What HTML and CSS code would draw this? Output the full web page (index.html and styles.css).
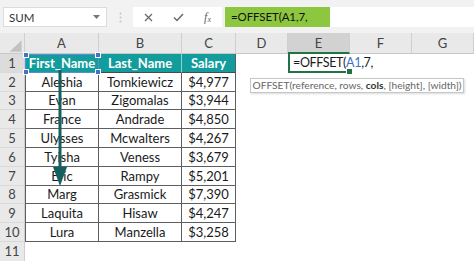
FILE: index.html
```html
<!DOCTYPE html>
<html>
<head>
<meta charset="utf-8">
<link rel="stylesheet" href="styles.css">
</head>
<body>
<div class="toolbar">
  <div class="namebox"><span>SUM</span><svg class="dd" width="7" height="4" viewBox="0 0 7 4"><path d="M0 0H7L3.5 4Z" fill="#777"/></svg></div>
  <div class="grip"><svg width="3" height="11" viewBox="0 0 3 11"><circle cx="1.5" cy="1.5" r="1" fill="#c4c4c4"/><circle cx="1.5" cy="5.5" r="1" fill="#c4c4c4"/><circle cx="1.5" cy="9.5" r="1" fill="#c4c4c4"/></svg></div>
  <div class="btns">
    <svg width="9" height="9" viewBox="0 0 9 9"><path d="M1 1L8 8M8 1L1 8" stroke="#6a6a6a" stroke-width="1.3"/></svg>
    <svg width="11" height="9" viewBox="0 0 11 9"><path d="M1 4.5L4 7.5L10 1" stroke="#6a6a6a" stroke-width="1.5" fill="none"/></svg>
    <span class="fx">f<sub>x</sub></span>
  </div>
  <div class="fbar"><span class="hl">=OFFSET(A1,7,</span></div>
</div>
<div class="sheet">
  <div class="corner"><svg width="25" height="21" viewBox="0 0 25 21"><path d="M22.5 7V19H10Z" fill="#c2c2c2"/></svg></div>
  <div class="ch">A</div><div class="ch">B</div><div class="ch">C</div><div class="ch">D</div><div class="ch sel">E</div><div class="ch">F</div><div class="ch">G</div>

  <div class="rh sel">1</div><div class="th first">First_Name</div><div class="th">Last_Name</div><div class="th">Salary</div><div class="e"></div><div class="e active"><span class="etext">=OFFSET(<span class="ref">A1</span>,7,</span></div><div class="e"></div><div class="e"></div>

  <div class="rh">2</div><div class="td first">Aleshia</div><div class="td">Tomkiewicz</div><div class="td">$4,977</div><div class="e"></div><div class="e"></div><div class="e"></div><div class="e"></div>
  <div class="rh">3</div><div class="td first">Evan</div><div class="td">Zigomalas</div><div class="td">$3,944</div><div class="e"></div><div class="e"></div><div class="e"></div><div class="e"></div>
  <div class="rh">4</div><div class="td first">France</div><div class="td">Andrade</div><div class="td">$4,850</div><div class="e"></div><div class="e"></div><div class="e"></div><div class="e"></div>
  <div class="rh">5</div><div class="td first">Ulysses</div><div class="td">Mcwalters</div><div class="td">$4,267</div><div class="e"></div><div class="e"></div><div class="e"></div><div class="e"></div>
  <div class="rh">6</div><div class="td first">Tyisha</div><div class="td">Veness</div><div class="td">$3,679</div><div class="e"></div><div class="e"></div><div class="e"></div><div class="e"></div>
  <div class="rh">7</div><div class="td first">Eric</div><div class="td">Rampy</div><div class="td">$5,201</div><div class="e"></div><div class="e"></div><div class="e"></div><div class="e"></div>
  <div class="rh">8</div><div class="td first">Marg</div><div class="td">Grasmick</div><div class="td">$7,390</div><div class="e"></div><div class="e"></div><div class="e"></div><div class="e"></div>
  <div class="rh">9</div><div class="td first">Laquita</div><div class="td">Hisaw</div><div class="td">$4,247</div><div class="e"></div><div class="e"></div><div class="e"></div><div class="e"></div>
  <div class="rh">10</div><div class="td first">Lura</div><div class="td">Manzella</div><div class="td">$3,258</div><div class="e"></div><div class="e"></div><div class="e"></div><div class="e"></div>
  <div class="rh last">11</div><div class="e"></div><div class="e"></div><div class="e"></div><div class="e"></div><div class="e"></div><div class="e"></div><div class="e"></div>

  <div class="refbox"><i class="h tl"></i><i class="h tr"></i><i class="h br"></i><i class="h bl"></i></div>
  <svg class="arrow" width="20" height="118" viewBox="0 0 20 118"><rect x="8.5" y="0" width="3" height="102" fill="#146060"/><path d="M3 97H17L10 116Z" fill="#146060"/></svg>
  <div class="tip">OFFSET(reference, rows,&nbsp;<b>cols</b>, [height], [width])</div>
</div>
</body>
</html>
```

FILE: styles.css
```css
html, body {
  margin: 0;
  padding: 0;
}
body {
  width: 474px;
  height: 262px;
  overflow: hidden;
  background: #fff;
  font-family: Lato, "Liberation Sans", sans-serif;
}

/* ---------- formula toolbar ---------- */
.toolbar {
  height: 33px;
  box-sizing: border-box;
  padding-top: 7px;
  background: #f2f2f2;
  display: flex;
  align-items: flex-start;
}
.namebox {
  margin-left: 3px;
  width: 104px;
  height: 20px;
  box-sizing: border-box;
  background: #fff;
  border: 1px solid #dcdcdc;
  display: flex;
  align-items: center;
  padding: 0 6px 0 5px;
  font-size: 11.5px;
  color: #333;
}
.namebox .dd {
  margin-left: auto;
}
.grip {
  width: 26px;
  height: 20px;
  display: flex;
  align-items: center;
  justify-content: center;
}
.btns {
  width: 89px;
  height: 20px;
  background: #fff;
  display: flex;
  align-items: center;
  justify-content: space-between;
  padding: 0 11px 0 11px;
  box-sizing: border-box;
}
.fx {
  font-family: "Liberation Serif", serif;
  font-style: italic;
  font-size: 12px;
  color: #666;
  line-height: 1;
}
.fx sub {
  font-size: 8px;
  vertical-align: -1px;
}
.fbar {
  margin-left: 3px;
  flex: 1;
  height: 20px;
  background: #fff;
  display: flex;
}
.hl {
  width: 105px;
  box-sizing: border-box;
  padding-left: 6px;
  background: #8dc63f;
  font-size: 11.5px;
  letter-spacing: -0.1px;
  line-height: 20px;
  color: #111;
}

/* ---------- sheet grid ---------- */
.sheet {
  position: relative;
  display: grid;
  grid-template-columns: 25px 74px 83px 54px 52px 62px 62px 62px;
  grid-template-rows: 21px repeat(11, 18.8px);
  font-size: 13px;
  color: #1a1a1a;
}
.sheet > div {
  box-sizing: border-box;
  display: flex;
  align-items: center;
  justify-content: center;
  white-space: nowrap;
}
.corner {
  background: #e9e9e9;
  border-right: 1px solid #cfcfcf;
  border-bottom: 1px solid #c8c8c8;
}
.ch {
  background: #e9e9e9;
  border-right: 1px solid #cfcfcf;
  border-bottom: 1px solid #c8c8c8;
  color: #444;
  font-size: 13px;
}
.ch.sel {
  background: #d2d2d2;
  border-bottom: 2px solid #217346;
}
.rh {
  background: #e9e9e9;
  border-right: 1px solid #cfcfcf;
  border-bottom: 1px solid #d9d9d9;
  color: #444;
  font-size: 13px;
}
.rh.sel {
  background: #dcdcdc;
}
.rh.last {
  border-bottom: none;
}
.th {
  background: #129c9c;
  color: #fff;
  font-weight: bold;
  border-right: 1px solid #8fd0d0;
  border-bottom: 1px solid #4a4a4a;
}
.td {
  border-right: 1px solid #5e5e5e;
  border-bottom: 1px solid #5e5e5e;
}
.th:nth-child(4n) , .td:nth-child(4n) {
  border-right-color: #5e5e5e;
}
.first {
  border-left: 1px solid #5e5e5e;
}
.sheet > .active {
  justify-content: flex-start;
  padding-left: 3px;
  border-left: 2px solid #217346;
  border-bottom: 2px solid #217346;
  position: relative;
  overflow: visible;
  z-index: 1;
}
.etext {
  font-size: 12.5px;
  letter-spacing: -0.35px;
}
.active::after {
  content: "";
  position: absolute;
  right: -3px;
  bottom: -4px;
  width: 5px;
  height: 5px;
  background: #217346;
  border: 1px solid #fff;
}
.ref {
  color: #3f6fc2;
}

/* ---------- overlays ---------- */
.refbox {
  position: absolute;
  left: 25px;
  top: 21px;
  width: 74px;
  height: 19px;
  box-sizing: border-box;
  border: 1px solid #5d8ad6;
}
.h {
  position: absolute;
  width: 4px;
  height: 4px;
  background: #4472c4;
  border: 1px solid #fff;
}
.h.tl { left: -3px; top: -3px; }
.h.tr { right: -3px; top: -3px; }
.h.br { right: -3px; bottom: -3px; }
.h.bl { left: -3px; bottom: -3px; }
.arrow {
  position: absolute;
  left: 50px;
  top: 37px;
}
.tip {
  position: absolute;
  left: 250px;
  top: 45px;
  width: 214px;
  height: 15px;
  box-sizing: border-box;
  padding: 0 4px;
  background: #fff;
  border: 1px solid #c6c6c6;
  box-shadow: 1px 1px 2px rgba(0, 0, 0, 0.15);
  font-family: Lato, "Liberation Sans", sans-serif;
  font-size: 10.2px;
  line-height: 13px;
  color: #666;
  white-space: nowrap;
  overflow: hidden;
}
.tip b {
  color: #333;
}
```
